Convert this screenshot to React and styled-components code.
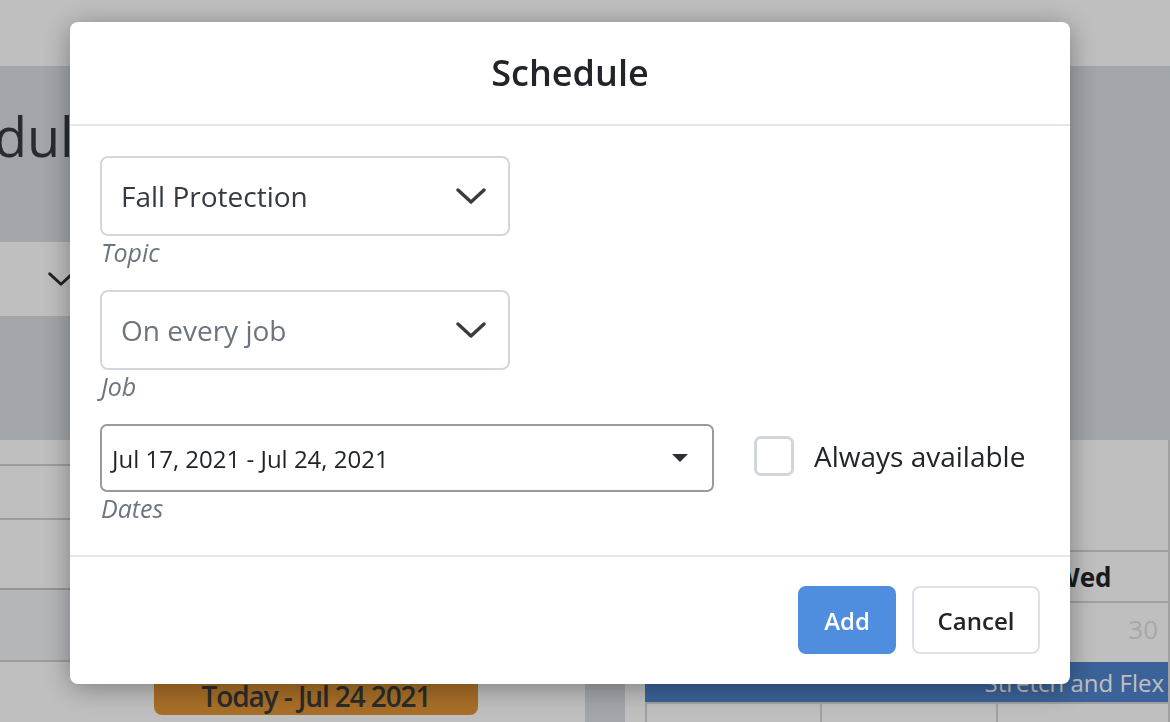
import React from "react";
import styled, { createGlobalStyle } from "styled-components";

const GlobalStyle = createGlobalStyle`
  html, body {
    margin: 0;
    padding: 0;
    background: #ffffff;
    font-family: "Open Sans", "Liberation Sans", sans-serif;
    color: #212529;
  }
  * {
    box-sizing: border-box;
  }
`;

/* ---------- page behind the dialog ---------- */

const Page = styled.div`
  width: 1170px;
  height: 722px;
  overflow: hidden;
  display: flex;
  flex-direction: column;
`;

const TopBar = styled.div`
  height: 66px;
  flex: none;
  background: #ffffff;
`;

const Hero = styled.div`
  height: 374px;
  flex: none;
  background: #d8dde3;
  display: flex;
  flex-direction: column;
`;

const HeroTitle = styled.h1`
  height: 174px;
  margin: 0 0 0 -125px;
  padding-top: 33px;
  font-size: 54px;
  font-weight: 400;
  color: #373a3e;
  white-space: nowrap;
`;

const HeroSelect = styled.div`
  width: 585px;
  height: 78px;
  background: #ffffff;
  border-top: 2px solid #dcdcdc;
  border-bottom: 2px solid #dcdcdc;
  display: flex;
  align-items: center;
  padding-left: 48px;
`;

const Lower = styled.div`
  flex: 1;
  min-height: 0;
  overflow: hidden;
  display: flex;
`;

const SideColumn = styled.div`
  width: 585px;
  display: flex;
  flex-direction: column;
`;

const SideRow = styled.div`
  height: ${(p) => p.$h}px;
  flex: none;
  border-bottom: 2px solid ${(p) => (p.$strong ? "#c4c8cc" : "#d2d2d2")};
  background: ${(p) => p.$bg || "#ffffff"};
`;

const SideFoot = styled.div`
  flex: 1;
  padding: 0 0 7px 154px;
  display: flex;
  align-items: flex-end;
`;

const TodayButton = styled.div`
  width: 324px;
  height: 48px;
  background: #e09435;
  border-radius: 0 0 8px 8px;
  display: flex;
  align-items: flex-end;
  justify-content: center;
  font-size: 28px;
  line-height: 38px;
  font-weight: 600;
  letter-spacing: -1.1px;
  color: #3a3a3a;
`;

const Gutter = styled.div`
  width: 40px;
  background: #d8dde3;
`;

const CalendarColumn = styled.div`
  flex: 1;
  margin-left: 20px;
  padding-top: 110px;
  border-right: 2px solid #d6d6d6;
`;

const WeekRow = styled.div`
  display: grid;
  grid-template-columns: 175px 176px 1fr;
  height: ${(p) => p.$h}px;
  border-top: 2px solid #d6d6d6;
`;

const DayCell = styled.div`
  border-left: 2px solid #d6d6d6;
  display: flex;
  align-items: ${(p) => (p.$head ? "center" : "flex-start")};
  justify-content: ${(p) => (p.$head ? "center" : "flex-end")};
  padding: ${(p) => (p.$head ? "0 10px" : "8px 10px 0")};
  font-size: 26px;
  font-weight: ${(p) => (p.$head ? 700 : 400)};
  color: ${(p) => (p.$head ? "#212529" : "#e0e0e0")};
`;

const EventBar = styled.div`
  height: 40px;
  background: #4f84cc;
  color: #ffffff;
  font-size: 24px;
  display: flex;
  align-items: center;
  justify-content: flex-end;
  padding-right: 4px;
`;

/* ---------- dialog ---------- */

const Overlay = styled.div`
  position: fixed;
  inset: 0;
  background: rgba(0, 0, 0, 0.25);
  padding: 22px 0 0 70px;
`;

const Dialog = styled.div`
  width: 1000px;
  background: #ffffff;
  border-radius: 8px;
  box-shadow: 0 4px 28px rgba(0, 0, 0, 0.35);
`;

const DialogHeader = styled.div`
  height: 104px;
  display: flex;
  align-items: center;
  justify-content: center;
  border-bottom: 2px solid #e3e7eb;
`;

const DialogTitle = styled.h2`
  margin: 0 0 2px;
  font-size: 36px;
  font-weight: 600;
  color: #212529;
`;

const DialogBody = styled.div`
  padding: 30px 30px 31px;
  display: flex;
  flex-direction: column;
  gap: 22px;
`;

const Field = styled.div`
  display: flex;
  flex-direction: column;
`;

const FieldRow = styled.div`
  display: flex;
  align-items: flex-start;
  gap: 40px;
`;

const SelectBox = styled.div`
  width: 410px;
  height: 80px;
  border: 2px solid #d3d7dc;
  border-radius: 8px;
  display: flex;
  align-items: center;
  justify-content: space-between;
  padding: 0 22px 0 19px;
  font-size: 28px;
  color: ${(p) => (p.$muted ? "#6c757d" : "#343a40")};
`;

const DateBox = styled.div`
  width: 614px;
  height: 68px;
  border: 2px solid #9a9a9a;
  border-radius: 7px;
  display: flex;
  align-items: center;
  justify-content: space-between;
  padding: 0 24px 0 10px;
  font-size: 24px;
  color: #212529;
`;

const FieldLabel = styled.span`
  margin-top: 1px;
  padding-left: 1px;
  font-size: 25px;
  line-height: 31px;
  font-style: italic;
  color: #6c757d;
`;

const CheckLabel = styled.label`
  display: flex;
  align-items: center;
  gap: 20px;
  margin-top: 12px;
  font-size: 28px;
  color: #212529;
`;

const CheckBox = styled.span`
  width: 40px;
  height: 40px;
  border: 3px solid #d1d6db;
  border-radius: 7px;
  background: #ffffff;
`;

const DialogFooter = styled.div`
  border-top: 2px solid #e3e7eb;
  padding: 29px 30px 30px;
  display: flex;
  justify-content: flex-end;
  gap: 16px;
`;

const Button = styled.button`
  height: 68px;
  min-width: ${(p) => (p.$primary ? 98 : 128)}px;
  padding: 0 20px;
  border-radius: 8px;
  border: 2px solid ${(p) => (p.$primary ? "#4f8ede" : "#dee2e6")};
  background: ${(p) => (p.$primary ? "#4f8ede" : "#ffffff")};
  color: ${(p) => (p.$primary ? "#ffffff" : "#212529")};
  font-family: inherit;
  font-size: 24px;
  font-weight: 600;
  cursor: pointer;
`;

const Chevron = ({ color = "#3b3b3b", width = 30 }) => (
  <svg width={width} height={width / 2 + 2} viewBox="0 0 30 17" fill="none">
    <polyline
      points="2,2 15,14 28,2"
      stroke={color}
      strokeWidth="3.4"
      strokeLinecap="round"
      strokeLinejoin="round"
    />
  </svg>
);

const Caret = () => (
  <svg width="16" height="8" viewBox="0 0 16 8">
    <polygon points="0,0 16,0 8,8" fill="#2b2f33" />
  </svg>
);

const App = () => (
  <>
    <GlobalStyle />
    <Page>
      <TopBar />
      <Hero>
        <HeroTitle>Schedule</HeroTitle>
        <HeroSelect>
          <Chevron color="#2f2f2f" width={26} />
        </HeroSelect>
      </Hero>
      <Lower>
        <SideColumn>
          <SideRow $h={26} />
          <SideRow $h={54} />
          <SideRow $h={70} $strong />
          <SideRow $h={72} $bg="#f0f3f7" />
          <SideFoot>
            <TodayButton>Today - Jul 24 2021</TodayButton>
          </SideFoot>
        </SideColumn>
        <Gutter />
        <CalendarColumn>
          <WeekRow $h={51}>
            <DayCell $head>Mon</DayCell>
            <DayCell $head>Tue</DayCell>
            <DayCell $head>Wed</DayCell>
          </WeekRow>
          <WeekRow $h={61}>
            <DayCell>28</DayCell>
            <DayCell>29</DayCell>
            <DayCell>30</DayCell>
          </WeekRow>
          <EventBar>Stretch and Flex</EventBar>
          <WeekRow $h={40}>
            <DayCell />
            <DayCell />
            <DayCell />
          </WeekRow>
        </CalendarColumn>
      </Lower>
    </Page>

    <Overlay>
      <Dialog>
        <DialogHeader>
          <DialogTitle>Schedule</DialogTitle>
        </DialogHeader>
        <DialogBody>
          <Field>
            <SelectBox>
              Fall Protection
              <Chevron />
            </SelectBox>
            <FieldLabel>Topic</FieldLabel>
          </Field>
          <Field>
            <SelectBox $muted>
              On every job
              <Chevron />
            </SelectBox>
            <FieldLabel>Job</FieldLabel>
          </Field>
          <FieldRow>
            <Field>
              <DateBox>
                Jul 17, 2021 - Jul 24, 2021
                <Caret />
              </DateBox>
              <FieldLabel>Dates</FieldLabel>
            </Field>
            <CheckLabel>
              <CheckBox />
              Always available
            </CheckLabel>
          </FieldRow>
        </DialogBody>
        <DialogFooter>
          <Button $primary>Add</Button>
          <Button>Cancel</Button>
        </DialogFooter>
      </Dialog>
    </Overlay>
  </>
);

export default App;
